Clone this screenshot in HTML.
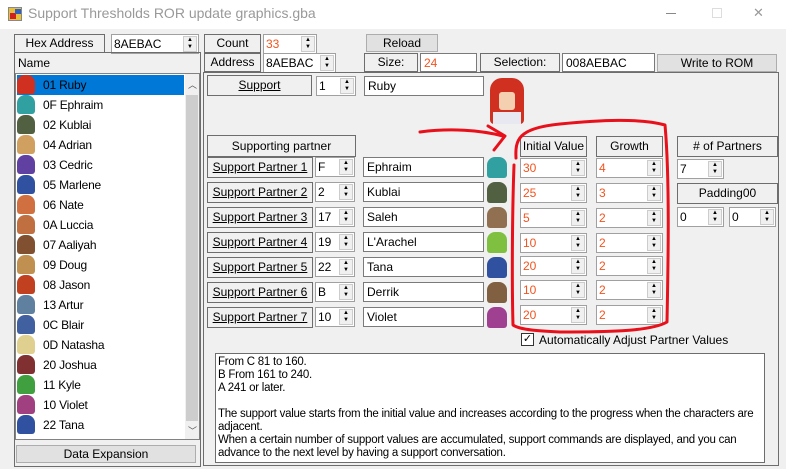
<!DOCTYPE html>
<html><head><meta charset="utf-8"><style>
*{box-sizing:border-box;margin:0;padding:0}
body{width:786px;height:469px;background:#f0f0f0;font-family:"Liberation Sans",sans-serif;font-size:12px;color:#000;position:relative;overflow:hidden}
.a{position:absolute}
.lbl{position:absolute;border:1px solid #6d6d6d;background:#f0f0f0;text-align:center;line-height:17px;height:19px;color:#000}
.btn{position:absolute;border:1px solid #adadad;background:#e1e1e1;text-align:center;line-height:16px;height:18px}
.ub{position:absolute;border:1px solid #6d6d6d;background:#f0f0f0;text-align:center;line-height:19px;height:21px;text-decoration:underline}
.sp{position:absolute;background:#fff;border:1px solid #a0a0a0;height:20px;padding-left:2px;line-height:18px;font-size:12px}
.sp .ar{position:absolute;right:1px;top:1px;width:14px;height:16px;background:#f0f0f0;border:1px solid #ccc;font-size:6px;line-height:7px;text-align:center;color:#000}
.tx{position:absolute;background:#fff;border:1px solid #7a7a7a;height:20px;padding-left:3px;line-height:18px}
.r{color:#f2541f}
.it{position:absolute;left:17px;width:167px;height:20px;line-height:20px;padding-left:26px;font-size:12px;letter-spacing:-0.2px}
.pt{position:absolute;width:18px;height:19px;border-radius:8px 8px 3px 3px}
</style></head><body>
<div class="a" style="left:0;top:0;width:786px;height:29px;background:#fff"></div>
<div class="a" style="left:8px;top:7px;width:14px;height:14px;background:#e8c040;border:1px solid #888"><div class="a" style="left:1px;top:5px;width:6px;height:6px;background:#d02020"></div><div class="a" style="left:6px;top:1px;width:6px;height:5px;background:#3060c0"></div></div>
<div class="a" style="left:28px;top:5px;font-size:14px;color:#999">Support Thresholds ROR update graphics.gba</div>
<div class="a" style="left:666px;top:13px;width:10px;height:1px;background:#888"></div>
<div class="a" style="left:712px;top:8px;width:10px;height:10px;border:1px solid #ddd"></div>
<div class="a" style="left:753px;top:5px;font-size:13px;color:#999">✕</div>

<!-- top row -->
<div class="lbl" style="left:14px;top:34px;width:91px">Hex Address</div>
<div class="sp" style="left:111px;top:34px;width:88px">8AEBAC<div class="ar">▲<br>▼</div></div>
<div class="lbl" style="left:204px;top:34px;width:57px">Count</div>
<div class="sp r" style="left:263px;top:34px;width:54px">33<div class="ar" style="color:#000">▲<br>▼</div></div>
<div class="btn" style="left:366px;top:34px;width:72px">Reload</div>

<!-- left panel -->
<div class="a" style="left:14px;top:52px;width:187px;height:415px;border:1px solid #6d6d6d"></div>
<div class="a" style="left:18px;top:56px">Name</div>
<div class="a" style="left:15px;top:73px;width:185px;height:367px;background:#fff;border:1px solid #828282"></div>
<div class="a" style="left:185px;top:74px;width:14px;height:365px;background:#f0f0f0"></div>
<div class="a" style="left:186px;top:95px;width:12px;height:326px;background:#cdcdcd"></div>
<div class="a" style="left:188px;top:78px;font-size:9px;color:#555">︿</div>
<div class="a" style="left:188px;top:424px;font-size:9px;color:#555">﹀</div>
<div class="it" style="top:75px;background:#0078d7">01 Ruby</div>
<div class="it" style="top:95px">0F Ephraim</div>
<div class="it" style="top:115px">02 Kublai</div>
<div class="it" style="top:135px">04 Adrian</div>
<div class="it" style="top:155px">03 Cedric</div>
<div class="it" style="top:175px">05 Marlene</div>
<div class="it" style="top:195px">06 Nate</div>
<div class="it" style="top:215px">0A Luccia</div>
<div class="it" style="top:235px">07 Aaliyah</div>
<div class="it" style="top:255px">09 Doug</div>
<div class="it" style="top:275px">08 Jason</div>
<div class="it" style="top:295px">13 Artur</div>
<div class="it" style="top:315px">0C Blair</div>
<div class="it" style="top:335px">0D Natasha</div>
<div class="it" style="top:355px">20 Joshua</div>
<div class="it" style="top:375px">11 Kyle</div>
<div class="it" style="top:395px">10 Violet</div>
<div class="it" style="top:415px">22 Tana</div>
<div class="pt" style="left:17px;top:75px;background:#d03020"></div>
<div class="pt" style="left:17px;top:95px;background:#30a0a0"></div>
<div class="pt" style="left:17px;top:115px;background:#506040"></div>
<div class="pt" style="left:17px;top:135px;background:#d0a060"></div>
<div class="pt" style="left:17px;top:155px;background:#6040a0"></div>
<div class="pt" style="left:17px;top:175px;background:#3050a0"></div>
<div class="pt" style="left:17px;top:195px;background:#d07040"></div>
<div class="pt" style="left:17px;top:215px;background:#c07040"></div>
<div class="pt" style="left:17px;top:235px;background:#805030"></div>
<div class="pt" style="left:17px;top:255px;background:#c09050"></div>
<div class="pt" style="left:17px;top:275px;background:#c04020"></div>
<div class="pt" style="left:17px;top:295px;background:#6080a0"></div>
<div class="pt" style="left:17px;top:315px;background:#4060a0"></div>
<div class="pt" style="left:17px;top:335px;background:#e0d090"></div>
<div class="pt" style="left:17px;top:355px;background:#803030"></div>
<div class="pt" style="left:17px;top:375px;background:#40a040"></div>
<div class="pt" style="left:17px;top:395px;background:#a04080"></div>
<div class="pt" style="left:17px;top:415px;background:#3050a0"></div>
<div class="btn" style="left:16px;top:445px;width:180px;height:18px;line-height:16px">Data Expansion</div>

<!-- second row -->
<div class="lbl" style="left:204px;top:53px;width:57px">Address</div>
<div class="sp" style="left:263px;top:53px;width:73px">8AEBAC<div class="ar">▲<br>▼</div></div>
<div class="lbl" style="left:364px;top:53px;width:54px">Size:</div>
<div class="tx r" style="left:420px;top:53px;width:57px;height:19px">24</div>
<div class="lbl" style="left:480px;top:53px;width:80px">Selection:</div>
<div class="tx" style="left:562px;top:53px;width:93px;height:19px">008AEBAC</div>
<div class="btn" style="left:657px;top:54px;width:120px">Write to ROM</div>

<!-- right panel -->
<div class="a" style="left:203px;top:72px;width:576px;height:394px;border:1px solid #6d6d6d"></div>
<div class="ub" style="left:207px;top:75px;width:105px">Support</div>
<div class="sp" style="left:316px;top:76px;width:40px">1<div class="ar">▲<br>▼</div></div>
<div class="tx" style="left:364px;top:76px;width:120px">Ruby</div>
<div class="a" style="left:490px;top:78px;width:34px;height:46px;background:#d03020;border-radius:12px 12px 4px 4px"><div class="a" style="left:9px;top:14px;width:16px;height:18px;background:#f5d0b0;border-radius:3px"></div><div class="a" style="left:3px;top:34px;width:28px;height:12px;background:#e8e8f0"></div></div>

<div class="lbl" style="left:207px;top:135px;width:149px;height:22px;line-height:20px">Supporting partner</div>

<div class="ub" style="left:207px;top:157px;width:106px">Support Partner 1</div>
<div class="ub" style="left:207px;top:182px;width:106px">Support Partner 2</div>
<div class="ub" style="left:207px;top:207px;width:106px">Support Partner 3</div>
<div class="ub" style="left:207px;top:232px;width:106px">Support Partner 4</div>
<div class="ub" style="left:207px;top:257px;width:106px">Support Partner 5</div>
<div class="ub" style="left:207px;top:282px;width:106px">Support Partner 6</div>
<div class="ub" style="left:207px;top:307px;width:106px">Support Partner 7</div>

<div class="sp" style="left:315px;top:157px;width:40px">F<div class="ar">▲<br>▼</div></div>
<div class="sp" style="left:315px;top:182px;width:40px">2<div class="ar">▲<br>▼</div></div>
<div class="sp" style="left:315px;top:207px;width:40px">17<div class="ar">▲<br>▼</div></div>
<div class="sp" style="left:315px;top:232px;width:40px">19<div class="ar">▲<br>▼</div></div>
<div class="sp" style="left:315px;top:257px;width:40px">22<div class="ar">▲<br>▼</div></div>
<div class="sp" style="left:315px;top:282px;width:40px">B<div class="ar">▲<br>▼</div></div>
<div class="sp" style="left:315px;top:307px;width:40px">10<div class="ar">▲<br>▼</div></div>

<div class="tx" style="left:363px;top:157px;width:121px">Ephraim</div>
<div class="tx" style="left:363px;top:182px;width:121px">Kublai</div>
<div class="tx" style="left:363px;top:207px;width:121px">Saleh</div>
<div class="tx" style="left:363px;top:232px;width:121px">L'Arachel</div>
<div class="tx" style="left:363px;top:257px;width:121px">Tana</div>
<div class="tx" style="left:363px;top:282px;width:121px">Derrik</div>
<div class="tx" style="left:363px;top:307px;width:121px">Violet</div>

<div class="pt" style="left:487px;top:157px;width:20px;height:21px;background:#30a0a0"></div>
<div class="pt" style="left:487px;top:182px;width:20px;height:21px;background:#506040"></div>
<div class="pt" style="left:487px;top:207px;width:20px;height:21px;background:#907050"></div>
<div class="pt" style="left:487px;top:232px;width:20px;height:21px;background:#80c040"></div>
<div class="pt" style="left:487px;top:257px;width:20px;height:21px;background:#3050a0"></div>
<div class="pt" style="left:487px;top:282px;width:20px;height:21px;background:#806040"></div>
<div class="pt" style="left:487px;top:307px;width:20px;height:21px;background:#a04090"></div>

<div class="lbl" style="left:520px;top:136px;width:67px;height:21px;line-height:19px">Initial Value</div>
<div class="lbl" style="left:596px;top:136px;width:67px;height:21px;line-height:19px">Growth</div>
<div class="sp r" style="left:520px;top:158px;width:67px">30<div class="ar">▲<br>▼</div></div>
<div class="sp r" style="left:520px;top:183px;width:67px">25<div class="ar">▲<br>▼</div></div>
<div class="sp r" style="left:520px;top:208px;width:67px">5<div class="ar">▲<br>▼</div></div>
<div class="sp r" style="left:520px;top:233px;width:67px">10<div class="ar">▲<br>▼</div></div>
<div class="sp r" style="left:520px;top:256px;width:67px">20<div class="ar">▲<br>▼</div></div>
<div class="sp r" style="left:520px;top:280px;width:67px">10<div class="ar">▲<br>▼</div></div>
<div class="sp r" style="left:520px;top:305px;width:67px">20<div class="ar">▲<br>▼</div></div>
<div class="sp r" style="left:596px;top:158px;width:67px">4<div class="ar">▲<br>▼</div></div>
<div class="sp r" style="left:596px;top:183px;width:67px">3<div class="ar">▲<br>▼</div></div>
<div class="sp r" style="left:596px;top:208px;width:67px">2<div class="ar">▲<br>▼</div></div>
<div class="sp r" style="left:596px;top:233px;width:67px">2<div class="ar">▲<br>▼</div></div>
<div class="sp r" style="left:596px;top:256px;width:67px">2<div class="ar">▲<br>▼</div></div>
<div class="sp r" style="left:596px;top:280px;width:67px">2<div class="ar">▲<br>▼</div></div>
<div class="sp r" style="left:596px;top:305px;width:67px">2<div class="ar">▲<br>▼</div></div>

<div class="lbl" style="left:677px;top:136px;width:101px;height:21px;line-height:19px">#&nbsp;of Partners</div>
<div class="sp" style="left:677px;top:159px;width:47px">7<div class="ar">▲<br>▼</div></div>
<div class="lbl" style="left:677px;top:183px;width:101px;height:21px;line-height:19px">Padding00</div>
<div class="sp" style="left:677px;top:207px;width:47px">0<div class="ar">▲<br>▼</div></div>
<div class="sp" style="left:729px;top:207px;width:47px">0<div class="ar">▲<br>▼</div></div>

<div class="a" style="left:521px;top:333px;width:13px;height:13px;border:1px solid #333;background:#fff;font-size:11px;line-height:11px;text-align:center">✓</div>
<div class="a" style="left:539px;top:333px">Automatically Adjust Partner Values</div>

<div class="a" style="left:215px;top:353px;width:550px;height:110px;background:#fff;border:1px solid #6d6d6d;padding:2px 2px;line-height:13px;font-size:11.5px;letter-spacing:-0.25px">From C 81 to 160.<br>B From 161 to 240.<br>A 241 or later.<br><br>The support value starts from the initial value and increases according to the progress when the characters are adjacent.<br>When a certain number of support values are accumulated, support commands are displayed, and you can advance to the next level by having a support conversation.</div>
<div class="a" style="left:767px;top:353px;width:11px;height:110px;background:#f0f0f0"></div>

<svg class="a" style="left:0;top:0" width="786" height="469">
<g fill="none" stroke="#e8101a" stroke-width="3" stroke-linecap="round" stroke-linejoin="round">
<path d="M420 132 C450 128 480 130 503 136"/>
<path d="M488 126 L505 136 L494 150"/>
<path d="M516 158 C515 140 518 128 560 124 C600 120 640 118 665 125 C670 180 668 270 667 322 C650 332 600 332 560 332 C540 331 520 330 513 325 C512 290 512 220 514 165"/>
</g></svg>
</body></html>
